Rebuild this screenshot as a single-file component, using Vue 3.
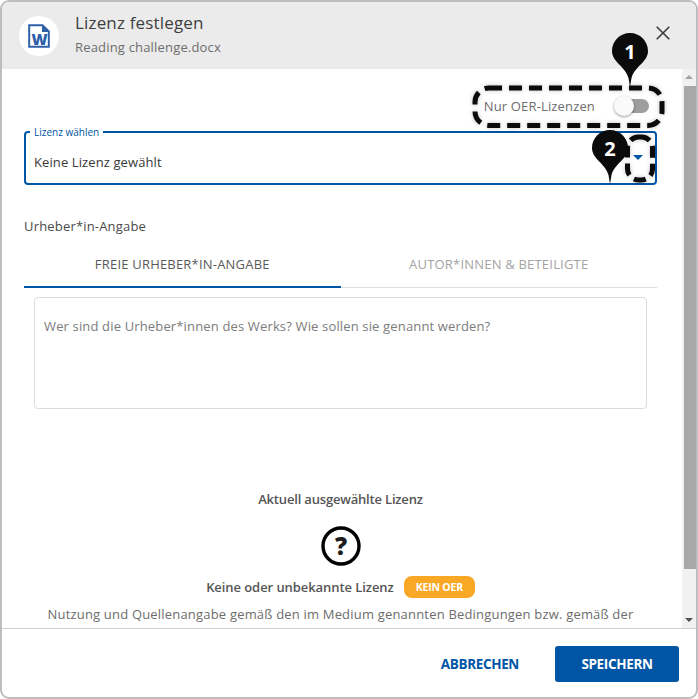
<template>
  <div class="page">
    <div class="dialog">
      <!-- Kopfzeile -->
      <header class="head">
        <div class="file-icon">
          <svg width="28" height="30" viewBox="-3 -3 28 30">
            <path d="M1.2 1.2h13.3l6.3 6.3v15.3H1.2z" fill="#fff" stroke="#2f5fa8" stroke-width="2"/>
            <path d="M14 1v7h7z" fill="#2f5fa8"/>
            <text x="11.5" y="21" text-anchor="middle" class="word-w">W</text>
          </svg>
        </div>
        <div class="head-text">
          <div class="head-title">Lizenz festlegen</div>
          <div class="head-sub">Reading challenge.docx</div>
        </div>
        <button class="close" aria-label="Schließen">
          <svg width="14" height="14" viewBox="0 0 14 14">
            <path d="M0.7 0.7l12.6 12.6M13.3 0.7L0.7 13.3" stroke="#3c3c3c" stroke-width="1.6" fill="none"/>
          </svg>
        </button>
      </header>

      <div class="middle">
        <div class="content">
          <div class="toggle-row">
            <span class="toggle-label">Nur OER-Lizenzen</span>
            <span class="toggle"><span class="knob"></span></span>
          </div>

          <div class="select">
            <span class="select-label">Lizenz wählen</span>
            <span class="select-value">Keine Lizenz gewählt</span>
            <span class="caret"></span>
          </div>

          <div class="section-label">Urheber*in-Angabe</div>

          <div class="tabs">
            <div
              v-for="tab in tabs"
              :key="tab.label"
              class="tab"
              :class="{ active: tab.active }"
            >{{ tab.label }}</div>
          </div>

          <div class="textarea">Wer sind die Urheber*innen des Werks? Wie sollen sie genannt werden?</div>

          <div class="current">Aktuell ausgewählte Lizenz</div>
          <svg class="question" width="40" height="40" viewBox="0 0 40 40">
            <circle cx="20" cy="20" r="18" fill="none" stroke="#000" stroke-width="3.4"/>
            <text x="20" y="28.5" text-anchor="middle" class="q-mark">?</text>
          </svg>
          <div class="license-row">
            <span class="license-name">Keine oder unbekannte Lizenz</span>
            <span class="badge">KEIN OER</span>
          </div>
          <p class="license-text">Nutzung und Quellenangabe gemäß den im Medium genannten Bedingungen bzw. gemäß der üblichen gesetzlichen Urheberrechtsregeln</p>
        </div>

        <!-- Scrollbar -->
        <div class="scrollbar">
          <span class="arrow up"></span>
          <div class="track"><div class="thumb"></div></div>
          <span class="arrow down"></span>
        </div>
      </div>

      <footer class="foot">
        <button class="btn-text">ABBRECHEN</button>
        <button class="btn-primary">SPEICHERN</button>
      </footer>
    </div>

    <!-- Markierungen über dem Screenshot -->
    <svg class="dash dash-toggle" width="200" height="48" viewBox="0 0 200 48">
      <rect x="5" y="4" width="187" height="37.5" rx="14" fill="none" stroke="#0b0b0b" stroke-width="5" stroke-dasharray="13 7"/>
    </svg>
    <svg class="dash dash-caret" width="36" height="54" viewBox="0 0 36 54">
      <rect x="5.5" y="5" width="25" height="43" rx="11" fill="none" stroke="#0b0b0b" stroke-width="5" stroke-dasharray="12 6"/>
    </svg>
    <svg class="pin pin-1" width="38" height="56" viewBox="0 0 38 56">
      <path d="M19 1C9 1 1 9 1 19c0 11 13 15 16.5 27L19 55l1.500-9C24 34 37 30 37 19 37 9 29 1 19 1z" fill="#0b0b0b"/>
      <text x="19" y="27" text-anchor="middle" class="pin-num">1</text>
    </svg>
    <svg class="pin pin-2" width="38" height="56" viewBox="0 0 38 56">
      <path d="M19 1C9 1 1 9 1 19c0 11 13 15 16.500 27L19 55l1.500-9C24 34 37 30 37 19 37 9 29 1 19 1z" fill="#0b0b0b"/>
      <text x="19" y="27" text-anchor="middle" class="pin-num">2</text>
    </svg>
  </div>
</template>

<script setup>
import { ref } from 'vue'

const tabs = ref([
  { label: 'FREIE URHEBER*IN-ANGABE', active: true },
  { label: 'AUTOR*INNEN & BETEILIGTE', active: false }
])
</script>

<style>
html, body {
  margin: 0;
  background: #fff;
}
</style>

<style scoped>
.page {
  position: relative;
  width: 698px;
  height: 699px;
  overflow: hidden;
  font-family: "Open Sans", "Liberation Sans", sans-serif;
  color: #383838;
}

.dialog {
  box-sizing: border-box;
  width: 698px;
  height: 699px;
  border: 2px solid #bdbdbd;
  border-radius: 9px;
  background: #fff;
  display: flex;
  flex-direction: column;
  overflow: hidden;
}

/* Kopfzeile */
.head {
  flex: none;
  height: 67px;
  background: #ebebeb;
  display: flex;
  align-items: center;
  padding: 0 24px 0 17px;
}

.file-icon {
  width: 40px;
  height: 40px;
  border-radius: 50%;
  background: #fff;
  display: flex;
  align-items: center;
  justify-content: center;
  margin-right: 16px;
}

.word-w {
  font-family: "Open Sans", sans-serif;
  font-weight: 800;
  font-size: 15.5px;
  fill: #2f5fa8;
}

.head-text {
  flex: 1;
  margin-bottom: 5px;
}

.head-title {
  font-size: 17px;
  line-height: 23px;
  letter-spacing: 0.17px;
  color: #3f3f3f;
}

.head-sub {
  margin-top: 4px;
  font-size: 13px;
  line-height: 18px;
  letter-spacing: 0.18px;
  color: #6d6d6d;
}

.close {
  border: 0;
  padding: 0;
  background: none;
  display: flex;
  margin: 0 2px 5px 0;
}

/* Mitte */
.middle {
  flex: 1;
  min-height: 0;
  display: flex;
}

.content {
  flex: 1;
  min-width: 0;
  overflow: hidden;
  padding: 0 25px 0 22px;
  display: flex;
  flex-direction: column;
}

.toggle-row {
  flex: none;
  height: 24px;
  margin-top: 25px;
  display: flex;
  align-items: center;
  justify-content: flex-end;
  padding-right: 8px;
}

.toggle-label {
  font-size: 13px;
  letter-spacing: 0.15px;
  color: #6d6d6d;
  margin-right: 20px;
}

.toggle {
  position: relative;
  width: 34px;
  height: 14px;
  border-radius: 7px;
  background: #9e9e9e;
}

.knob {
  position: absolute;
  left: -1px;
  top: -3px;
  width: 20px;
  height: 20px;
  border-radius: 50%;
  background: #fafafa;
  box-shadow: 0 1px 3px rgba(0, 0, 0, 0.4);
}

.select {
  flex: none;
  box-sizing: border-box;
  position: relative;
  height: 54px;
  margin-top: 13px;
  border: 2px solid #0056a4;
  border-radius: 4px;
  display: flex;
  align-items: center;
  padding: 7px 8px 0;
}

.select-label {
  position: absolute;
  left: 4px;
  top: -8px;
  padding: 0 4px;
  background: #fff;
  font-size: 10px;
  line-height: 14px;
  color: #0056a4;
}

.select-value {
  flex: 1;
  font-size: 13px;
  letter-spacing: 0.1px;
  color: #383838;
}

.caret {
  width: 0;
  height: 0;
  border-left: 5px solid transparent;
  border-right: 5px solid transparent;
  border-top: 5px solid #0056a4;
  margin: 0 4px 8px 0;
}

.section-label {
  flex: none;
  margin-top: 32px;
  font-size: 13px;
  line-height: 18px;
  letter-spacing: 0.18px;
  color: #4a4a4a;
}

.tabs {
  flex: none;
  display: flex;
  margin-top: 8px;
  border-bottom: 1px solid #dedede;
}

.tab {
  flex: 1;
  height: 44px;
  box-sizing: border-box;
  display: flex;
  align-items: center;
  justify-content: center;
  padding-bottom: 2px;
  font-size: 13px;
  letter-spacing: 0.2px;
  color: #a3a3a3;
}

.tab.active {
  color: #5a5a5a;
  border-bottom: 2px solid #0056a4;
  margin-bottom: -1px;
  height: 45px;
}

.textarea {
  flex: none;
  box-sizing: border-box;
  height: 112px;
  margin: 9px 10px 0;
  padding: 19px 9px 0;
  border: 1px solid #dcdcdc;
  border-radius: 4px;
  font-size: 13px;
  line-height: 18px;
  letter-spacing: 0.15px;
  color: #7c7c7c;
}

.current {
  flex: none;
  margin-top: 81px;
  text-align: center;
  font-size: 13px;
  line-height: 18px;
  font-weight: 600;
  letter-spacing: -0.18px;
  color: #555;
}

.question {
  flex: none;
  align-self: center;
  margin-top: 18px;
}

.q-mark {
  font-family: "Open Sans", sans-serif;
  font-weight: 800;
  font-size: 24px;
  fill: #1c1c1c;
}

.license-row {
  flex: none;
  display: flex;
  align-items: center;
  justify-content: center;
  margin-top: 10px;
  height: 22px;
}

.license-name {
  font-size: 13px;
  font-weight: 600;
  letter-spacing: -0.07px;
  color: #555;
  margin-right: 10px;
}

.badge {
  height: 22px;
  padding: 0 12px;
  border-radius: 8px;
  background: #f9a825;
  color: #fff;
  font-size: 10.5px;
  font-weight: 700;
  line-height: 22px;
  letter-spacing: -0.2px;
}

.license-text {
  flex: none;
  margin: 5px 0 0;
  text-align: center;
  font-size: 13px;
  line-height: 22px;
  letter-spacing: 0.19px;
  color: #6d6d6d;
}

/* Scrollbar */
.scrollbar {
  flex: none;
  width: 14px;
  background: #f1f1f1;
  display: flex;
  flex-direction: column;
  align-items: center;
}

.arrow {
  flex: none;
  width: 0;
  height: 0;
  margin: 6px 0;
  border-left: 4px solid transparent;
  border-right: 4px solid transparent;
}

.arrow.up {
  border-bottom: 4px solid #a3a3a3;
}

.arrow.down {
  border-top: 4px solid #505050;
}

.track {
  flex: 1;
  width: 100%;
}

.thumb {
  height: 483px;
  margin: 1px 0 0 2px;
  background: #a8a8a8;
}

/* Fußzeile */
.foot {
  flex: none;
  height: 69px;
  box-sizing: border-box;
  border-top: 1px solid #cfcfcf;
  display: flex;
  align-items: center;
  justify-content: flex-end;
  padding: 2px 17px 0 0;
}

.btn-text,
.btn-primary {
  font-family: "Open Sans", "Liberation Sans", sans-serif;
  font-size: 13.5px;
  font-weight: 700;
  letter-spacing: -0.35px;
  border: 0;
  cursor: pointer;
}

.btn-text {
  background: none;
  color: #0056a4;
  margin-right: 36px;
  padding: 0;
}

.btn-primary {
  width: 124px;
  height: 36px;
  border-radius: 3px;
  background: #0056a4;
  color: #fff;
}

/* Markierungen */
.dash {
  position: absolute;
  filter: drop-shadow(0 0 2px rgba(0, 0, 0, 0.25));
}

.dash-toggle {
  left: 470px;
  top: 84px;
}

.dash-caret {
  left: 622px;
  top: 132px;
}

.pin {
  position: absolute;
}

.pin-1 {
  left: 611px;
  top: 32px;
}

.pin-2 {
  left: 591px;
  top: 129px;
}

.pin-num {
  font-family: "Open Sans", sans-serif;
  font-size: 20px;
  font-weight: 700;
  fill: #fff;
}
</style>
